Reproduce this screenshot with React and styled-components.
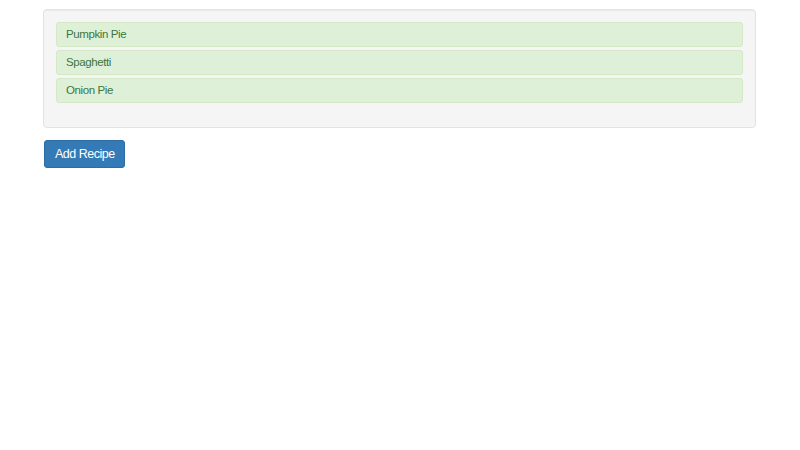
import React from 'react';
import styled, { createGlobalStyle } from 'styled-components';

const GlobalStyle = createGlobalStyle`
  html, body {
    margin: 0;
    padding: 0;
    background: #ffffff;
    font-family: 'Liberation Sans', Arial, sans-serif;
  }
`;

const Page = styled.div`
  padding: 9px 44px 0 43px;
`;

const Well = styled.div`
  background: #f5f5f5;
  border: 1px solid #e3e3e3;
  border-radius: 4px;
  box-shadow: inset 0 1px 1px rgba(0, 0, 0, 0.05);
  padding: 12px 12px 24px 12px;
  display: flex;
  flex-direction: column;
  gap: 3px;
`;

const RecipePanel = styled.div`
  background: #dff0d8;
  border: 1px solid #d6e9c6;
  border-radius: 3px;
  color: #3c763d;
  font-size: 11.5px;
  letter-spacing: -0.4px;
  line-height: 13px;
  padding: 5px 9px;
  cursor: pointer;
`;

const AddButton = styled.button`
  margin-top: 12px;
  margin-left: 1px;
  background: #337ab7;
  border: 1px solid #2e6da4;
  border-radius: 3px;
  color: #ffffff;
  font-family: 'Liberation Sans', Arial, sans-serif;
  font-size: 12.5px;
  letter-spacing: -0.5px;
  height: 28px;
  padding: 0 9px 0 10px;
  cursor: pointer;
`;

const recipes = ['Pumpkin Pie', 'Spaghetti', 'Onion Pie'];

const App = () => {
  return (
    <>
      <GlobalStyle />
      <Page>
        <Well>
          {recipes.map((name) => (
            <RecipePanel key={name}>{name}</RecipePanel>
          ))}
        </Well>
        <AddButton>Add Recipe</AddButton>
      </Page>
    </>
  );
};

export default App;
